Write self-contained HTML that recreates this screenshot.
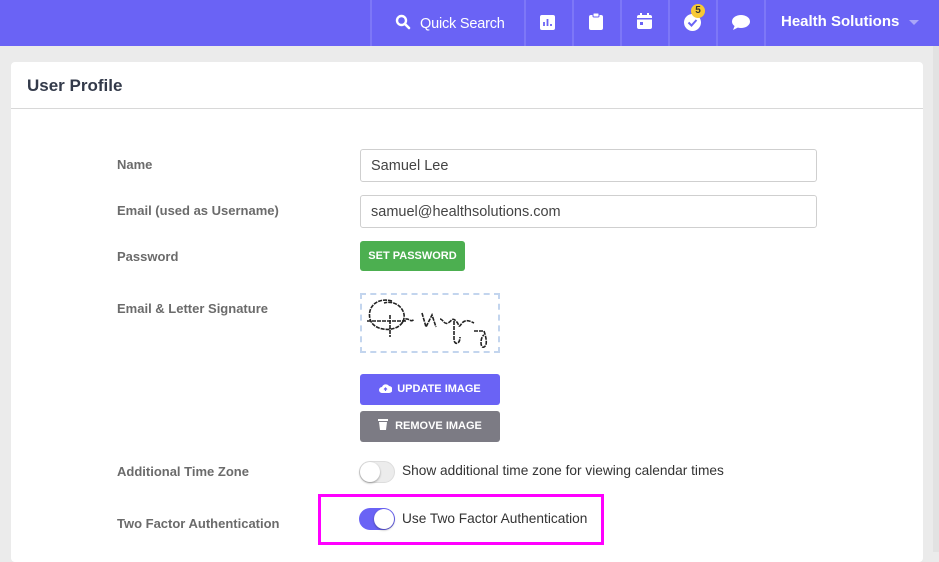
<!DOCTYPE html>
<html><head><style>
*{box-sizing:border-box;margin:0;padding:0}
body{width:939px;height:552px;overflow:hidden;background:#ebebeb;font-family:"Liberation Sans",sans-serif;position:relative}
.top{position:absolute;left:0;top:0;width:939px;height:46px;background:#6a63f5}
.sep{position:absolute;top:0;width:2px;height:46px;background:#7d77f7}
.tx{position:absolute;color:#fff;font-size:15px}
.card{position:absolute;left:11px;top:62px;width:912px;height:500px;background:#fff;border-radius:4px}
.hd{height:47px;border-bottom:1px solid #d8d8d8;padding:14px 16px;font-size:17px;font-weight:bold;color:#333a4a}
.lbl{position:absolute;left:117px;font-size:13px;color:#6b6b6b;font-weight:bold}
.inp{position:absolute;left:360px;width:457px;height:33px;border:1px solid #cfcfcf;border-radius:3px;padding:8px 10px;font-size:14.5px;color:#444}
.btn{position:absolute;left:360px;color:#fff;font-size:11px;font-weight:bold;border-radius:3px;text-align:center}
.sw{position:absolute;width:36px;height:22px;border-radius:11px}
.knob{position:absolute;top:1px;width:20px;height:20px;border-radius:50%;background:#fff;box-shadow:0 1px 2px rgba(0,0,0,.35)}
</style></head><body>
<div style="position:absolute;right:0;top:0;width:6px;height:552px;background:#e2e2e2"></div>
<div class="top">
 <div class="sep" style="left:370px"></div><div class="sep" style="left:524px"></div><div class="sep" style="left:572px"></div><div class="sep" style="left:620px"></div><div class="sep" style="left:668px"></div><div class="sep" style="left:716px"></div><div class="sep" style="left:764px"></div>
 <svg style="position:absolute;left:395px;top:14px" width="16" height="16" viewBox="0 0 16 16"><circle cx="6.5" cy="6.5" r="4.5" fill="none" stroke="#fff" stroke-width="2.4"/><path d="M10 10l4 4" stroke="#fff" stroke-width="2.6" stroke-linecap="round"/></svg>
 <div class="tx" style="left:420px;top:16px;font-size:14.5px;letter-spacing:-0.2px">Quick Search</div>
 <svg style="position:absolute;left:540px;top:15px" width="15" height="15" viewBox="0 0 15 15"><rect x="0" y="0" width="15" height="15" rx="2" fill="#fff"/><path d="M4 11V7M7.5 11V4M11 11V9" stroke="#6a63f5" stroke-width="1.8"/></svg>
 <svg style="position:absolute;left:589px;top:13px" width="14" height="17" viewBox="0 0 14 17"><rect x="0" y="2" width="14" height="15" rx="2" fill="#fff"/><rect x="4" y="0" width="6" height="4" rx="1" fill="#fff" stroke="#6a63f5"/></svg>
 <svg style="position:absolute;left:637px;top:13px" width="15" height="16" viewBox="0 0 15 16"><rect x="0" y="2" width="15" height="14" rx="2" fill="#fff"/><rect x="3" y="0" width="2" height="4" fill="#fff"/><rect x="10" y="0" width="2" height="4" fill="#fff"/><rect x="0" y="5" width="15" height="1.5" fill="#6a63f5"/><rect x="3" y="9" width="3" height="3" fill="#6a63f5"/></svg>
 <svg style="position:absolute;left:684px;top:14px" width="17" height="17" viewBox="0 0 17 17"><circle cx="8.5" cy="8.5" r="8.5" fill="#fff"/><path d="M4.5 8.5l3 3 5-5.5" fill="none" stroke="#6a63f5" stroke-width="2"/></svg>
 <div style="position:absolute;left:691px;top:4px;width:14px;height:14px;border-radius:50%;background:#f7c936;font-size:10px;font-weight:bold;color:#333;text-align:center;line-height:14px">5</div>
 <svg style="position:absolute;left:732px;top:15px" width="18" height="15" viewBox="0 0 18 15"><ellipse cx="9" cy="6.5" rx="9" ry="6.5" fill="#fff"/><path d="M3 10L1 15 7 12z" fill="#fff"/></svg>
 <div class="tx" style="left:781px;top:13px;font-weight:bold">Health Solutions</div>
 <div style="position:absolute;left:909px;top:20px;border-left:5px solid transparent;border-right:5px solid transparent;border-top:5px solid #aaa6f8"></div>
</div>
<div class="card"><div class="hd">User Profile</div></div>
<div class="lbl" style="top:157px">Name</div>
<div class="inp" style="top:149px">Samuel Lee</div>
<div class="lbl" style="top:203px">Email (used as Username)</div>
<div class="inp" style="top:195px">samuel@healthsolutions.com</div>
<div class="lbl" style="top:249px">Password</div>
<div class="btn" style="top:241px;width:105px;height:30px;line-height:30px;background:#4caf50">SET PASSWORD</div>
<div class="lbl" style="top:301px">Email &amp; Letter Signature</div>
<div style="position:absolute;left:360px;top:293px;width:140px;height:60px;border:2px dashed #c3d5ee"></div>
<svg style="position:absolute;left:362px;top:295px" width="136" height="56" viewBox="0 0 136 56"><g fill="none" stroke="#222" stroke-width="1.6" stroke-dasharray="4 1"><path d="M30 6C15 2 5 12 8 24s25 14 32 4S36 4 22 8"/><path d="M5 26h40M28 20v22"/><path d="M40 28c6-10 8 2 12-4"/><path d="M60 18l4 14 6-12 4 12M78 24c3 0 4 6 8 4s4-6 8-2 2 8 6 2c4-4 8-2 12 0"/><path d="M92 26v18c0 6 6 6 6-2M112 36h10c2 6 4 14 0 16s-4-10 0-12"/></g></svg>
<div class="btn" style="top:374px;width:140px;height:31px;line-height:31px;background:#6a63f5">
<svg width="13" height="10" viewBox="0 0 13 10" style="vertical-align:-1px;margin-right:5px"><path d="M3 10a3 3 0 010-6 4 4 0 017-1 3 3 0 010 7z" fill="#fff"/><path d="M6.5 8V5M5 6.5l1.5-1.5 1.5 1.5" stroke="#6a63f5" stroke-width="1.2" fill="none"/></svg>UPDATE IMAGE</div>
<div class="btn" style="top:411px;width:140px;height:31px;line-height:31px;background:#7c7b84">
<svg width="10" height="12" viewBox="0 0 10 12" style="vertical-align:-1px;margin-right:7px"><rect x="0" y="1" width="10" height="2" fill="#fff"/><path d="M1 4h8l-1 8H2z" fill="#fff"/></svg>REMOVE IMAGE</div>
<div class="lbl" style="top:464px">Additional Time Zone</div>
<div class="sw" style="left:359px;top:461px;background:#ececec;border:1px solid #ddd"><div class="knob" style="left:0;top:0"></div></div>
<div style="position:absolute;left:402px;top:463px;font-size:13.7px;color:#333">Show additional time zone for viewing calendar times</div>
<div class="lbl" style="top:516px">Two Factor Authentication</div>
<div style="position:absolute;left:318px;top:494px;width:286px;height:51px;border:3px solid #ff00ff"></div>
<div class="sw" style="left:359px;top:508px;background:#6a63f5"><div class="knob" style="left:15px"></div></div>
<div style="position:absolute;left:402px;top:511px;font-size:13.7px;color:#333">Use Two Factor Authentication</div>
</body></html>
